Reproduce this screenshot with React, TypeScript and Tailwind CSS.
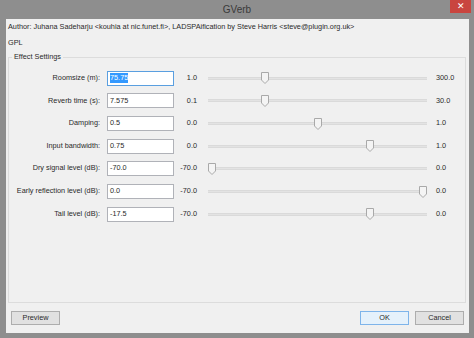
import React from "react";

interface Param {
  label: string;
  value: string;
  min: string;
  max: string;
  pos: number; // 0..1 slider position
  focused?: boolean;
}

const params: Param[] = [
  { label: "Roomsize (m):", value: "75.75", min: "1.0", max: "300.0", pos: 0.25, focused: true },
  { label: "Reverb time (s):", value: "7.575", min: "0.1", max: "30.0", pos: 0.25 },
  { label: "Damping:", value: "0.5", min: "0.0", max: "1.0", pos: 0.5 },
  { label: "Input bandwidth:", value: "0.75", min: "0.0", max: "1.0", pos: 0.75 },
  { label: "Dry signal level (dB):", value: "-70.0", min: "-70.0", max: "0.0", pos: 0 },
  { label: "Early reflection level (dB):", value: "0.0", min: "-70.0", max: "0.0", pos: 1 },
  { label: "Tail level (dB):", value: "-17.5", min: "-70.0", max: "0.0", pos: 0.75 },
];

function Slider({ pos }: { pos: number }) {
  // track is 219px wide, thumb 8px wide
  const left = pos * (219 - 8);
  return (
    <div className="relative w-[219px] h-full flex items-center">
      <div className="w-full h-[3px] bg-[#e3e3e3] border-y border-[#dadada]" />
      <svg
        className="absolute top-1/2 -translate-y-[6px]"
        style={{ left }}
        width="8"
        height="12"
        viewBox="0 0 8 12"
      >
        <path d="M0.5 0.5H7.5V8L4 11.5L0.5 8Z" fill="#f4f4f4" stroke="#a9a9a9" strokeWidth="1" />
      </svg>
    </div>
  );
}

function Row({ p }: { p: Param }) {
  return (
    <div className="flex items-center h-[22.67px]">
      <div className="w-[91px] text-right whitespace-nowrap">{p.label}</div>
      <div
        className={`ml-[7px] w-[67px] h-[15px] bg-white border flex items-center pl-[2px] ${
          p.focused ? "border-[#5a9fe0]" : "border-[#b0b2b8]"
        }`}
      >
        {p.focused ? <span className="bg-[#3399ff] text-white leading-[10px]">{p.value}</span> : p.value}
      </div>
      <div className="w-[23px] text-right">{p.min}</div>
      <div className="ml-[11px] h-full">
        <Slider pos={p.pos} />
      </div>
      <div className="ml-[9px]">{p.max}</div>
    </div>
  );
}

function Button({ label, primary }: { label: string; primary?: boolean }) {
  return (
    <div
      className={`w-[49px] h-[14px] flex items-center justify-center border ${
        primary ? "border-[#7eb4ea] bg-[#e5f1fb]" : "border-[#adadad] bg-[#e1e1e1]"
      }`}
    >
      {label}
    </div>
  );
}

export default function App() {
  return (
    <div className="w-[474px] h-[338px] bg-[#8e8e8e] flex flex-col font-['Liberation_Sans',Arial,sans-serif] text-[7.3px] text-[#2a2a2a]">
      {/* Title bar */}
      <div className="relative h-[19px] flex items-center justify-center text-[10px] text-[#3a3a3a]">
        GVerb
        <div className="absolute right-[3px] top-0 w-[21px] h-[13px] bg-[#c9453f] flex items-center justify-center text-white text-[9px] leading-none">
          ✕
        </div>
      </div>

      {/* Client area */}
      <div className="ml-[6px] w-[463px] h-[314px] bg-[#f0f0f0] flex flex-col">
        <div className="pl-[2px] h-[16px] flex items-center">
          Author: Juhana Sadeharju &lt;kouhia at nic.funet.fi&gt;, LADSPAification by Steve Harris &lt;steve@plugin.org.uk&gt;
        </div>
        <div className="pl-[2px] h-[16px] flex items-center">GPL</div>

        <fieldset className="mt-[1px] ml-[2px] w-[458px] h-[251px] border border-[#dcdcdc] pt-[5px]">
          <legend className="ml-[3px] px-[2px] leading-[10px]">Effect Settings</legend>
          {params.map((p) => (
            <Row key={p.label} p={p} />
          ))}
        </fieldset>

        <div className="flex items-center mt-[8px] px-[5px]">
          <Button label="Preview" />
          <div className="flex-1" />
          <Button label="OK" primary />
          <div className="w-[6px]" />
          <Button label="Cancel" />
        </div>
      </div>
    </div>
  );
}
